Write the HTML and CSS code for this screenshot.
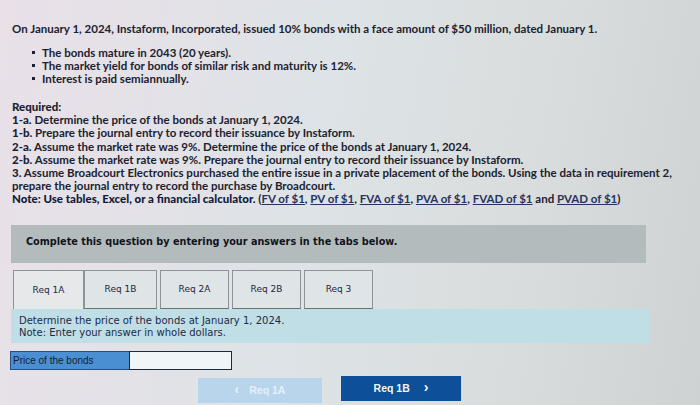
FILE: index.html
```html
<!DOCTYPE html>
<html>
<head>
<meta charset="utf-8">
<link rel="stylesheet" href="styles.css">
</head>
<body>
<div class="page">
  <p class="lead">On January 1, 2024, Instaform, Incorporated, issued 10% bonds with a face amount of $50 million, dated January 1.</p>
  <ul class="facts">
    <li>The bonds mature in 2043 (20 years).</li>
    <li>The market yield for bonds of similar risk and maturity is 12%.</li>
    <li>Interest is paid semiannually.</li>
  </ul>
  <div class="required">
    <div><b>Required:</b></div>
    <div><b>1-a.</b> Determine the price of the bonds at January 1, 2024.</div>
    <div><b>1-b.</b> Prepare the journal entry to record their issuance by Instaform.</div>
    <div><b>2-a.</b> Assume the market rate was 9%. Determine the price of the bonds at January 1, 2024.</div>
    <div><b>2-b.</b> Assume the market rate was 9%. Prepare the journal entry to record their issuance by Instaform.</div>
    <div class="nowrap"><b>3.</b> Assume Broadcourt Electronics purchased the entire issue in a private placement of the bonds. Using the data in requirement 2,<br>prepare the journal entry to record the purchase by Broadcourt.</div>
    <div><b class="note">Note: Use tables, Excel, or a financial calculator.</b> (<a>FV of $1</a>, <a>PV of $1</a>, <a>FVA of $1</a>, <a>PVA of $1</a>, <a>FVAD of $1</a> and <a>PVAD of $1</a>)</div>
  </div>

  <div class="banner">Complete this question by entering your answers in the tabs below.</div>

  <div class="tabs">
    <div class="tab active">Req 1A</div>
    <div class="tab">Req 1B</div>
    <div class="tab">Req 2A</div>
    <div class="tab">Req 2B</div>
    <div class="tab">Req 3</div>
  </div>
  <div class="panel">
    <div>Determine the price of the bonds at January 1, 2024.</div>
    <div>Note: Enter your answer in whole dollars.</div>
  </div>
  <div class="answer">
    <div class="label">Price of the bonds</div>
    <div class="input"></div>
  </div>
  <div class="nav">
    <div class="btn prev"><span class="chev">&lsaquo;</span>Req 1A</div>
    <div class="btn next">Req 1B<span class="chev r">&rsaquo;</span></div>
  </div>
</div>
</body>
</html>
```

FILE: styles.css
```css
html, body {
  margin: 0;
  padding: 0;
}
body {
  width: 700px;
  height: 405px;
  overflow: hidden;
  background: linear-gradient(100deg, #e9e0e8 0%, #dde3e6 45%, #d9dcdc 75%, #cfd2d2 100%);
  font-family: "Lato", "Liberation Sans", sans-serif;
  color: #1c2230;
}
.page {
  padding: 22px 0 0 12px;
}
.lead {
  margin: 0;
  font-size: 11.5px;
  font-weight: 700;
  line-height: 13px;
}
.facts {
  margin: 11px 0 0 0;
  padding: 0 0 0 30px;
  font-size: 11.5px;
  font-weight: 700;
  line-height: 13px;
}
.facts li {
  list-style: none;
  position: relative;
}
.facts li::before {
  content: "";
  position: absolute;
  left: -10px;
  top: 5px;
  width: 3px;
  height: 3px;
  background: #1c2230;
}
.required {
  margin-top: 15px;
  font-size: 11.5px;
  font-weight: 700;
  line-height: 13.2px;
  width: 688px;
}
.required .nowrap {
  white-space: nowrap;
}
.required b {
  font-weight: 900;
}
.required .note {
  color: #141a3c;
}
.required a {
  text-decoration: underline;
  color: #26345e;
}
.banner {
  margin: 19px 0 0 -1px;
  width: 635px;
  height: 38px;
  box-sizing: border-box;
  padding: 11px 0 0 15px;
  background: #b4bbbd;
  font-family: "DejaVu Sans", Verdana, sans-serif;
  font-weight: bold;
  font-size: 9.7px;
  color: #10141c;
}
.tabs {
  display: flex;
  margin-top: 7px;
  margin-left: 1px;
  height: 39px;
}
.tab {
  width: 69px;
  margin-right: 3px;
  box-sizing: border-box;
  border: 1px solid #8d9496;
  border-bottom: 1px solid #6a7070;
  background: #dfe4e6;
  font-family: "DejaVu Sans", Verdana, sans-serif;
  font-size: 9px;
  color: #1e2740;
  display: flex;
  align-items: center;
  justify-content: center;
}
.tab.active {
  width: 71px;
  margin-right: 0;
  border-bottom: none;
  background: #e6e8ea;
}
.tab:nth-child(2) {
  width: 73px;
}
.panel {
  margin-left: -1px;
  width: 638px;
  height: 34px;
  box-sizing: border-box;
  padding: 6px 0 0 8px;
  background: #bfdee6;
  font-family: "DejaVu Sans", Verdana, sans-serif;
  font-size: 10px;
  line-height: 12px;
  color: #1d2a48;
}
.answer {
  display: flex;
  margin: 8px 0 0 -2px;
  height: 19px;
}
.label {
  width: 119px;
  box-sizing: border-box;
  background: #4b8fd3;
  border: 1px solid #2c4f7a;
  border-right: none;
  font-family: "Liberation Sans", Arial, sans-serif;
  font-size: 10px;
  padding: 3px 0 0 2px;
  color: #142036;
}
.input {
  width: 103px;
  box-sizing: border-box;
  border: 1px solid #1e2a3a;
  background: #f0f6f8;
}
.nav {
  display: flex;
  margin: 6px 0 0 186px;
  gap: 19px;
}
.btn {
  width: 124px;
  height: 25px;
  box-sizing: border-box;
  display: flex;
  align-items: center;
  justify-content: center;
  font-family: "Liberation Sans", Arial, sans-serif;
  font-weight: bold;
  font-size: 10.5px;
}
.chev {
  font-size: 14px;
  margin-right: 10px;
  line-height: 1;
  position: relative;
  top: -1px;
}
.chev.r {
  margin-right: 0;
  margin-left: 14px;
}
.prev {
  margin-top: 2px;
  background: #b9d5ec;
  color: #e6eff8;
}
.next {
  width: 120px;
  background: #0d4f99;
  color: #f2f6fb;
}
```
